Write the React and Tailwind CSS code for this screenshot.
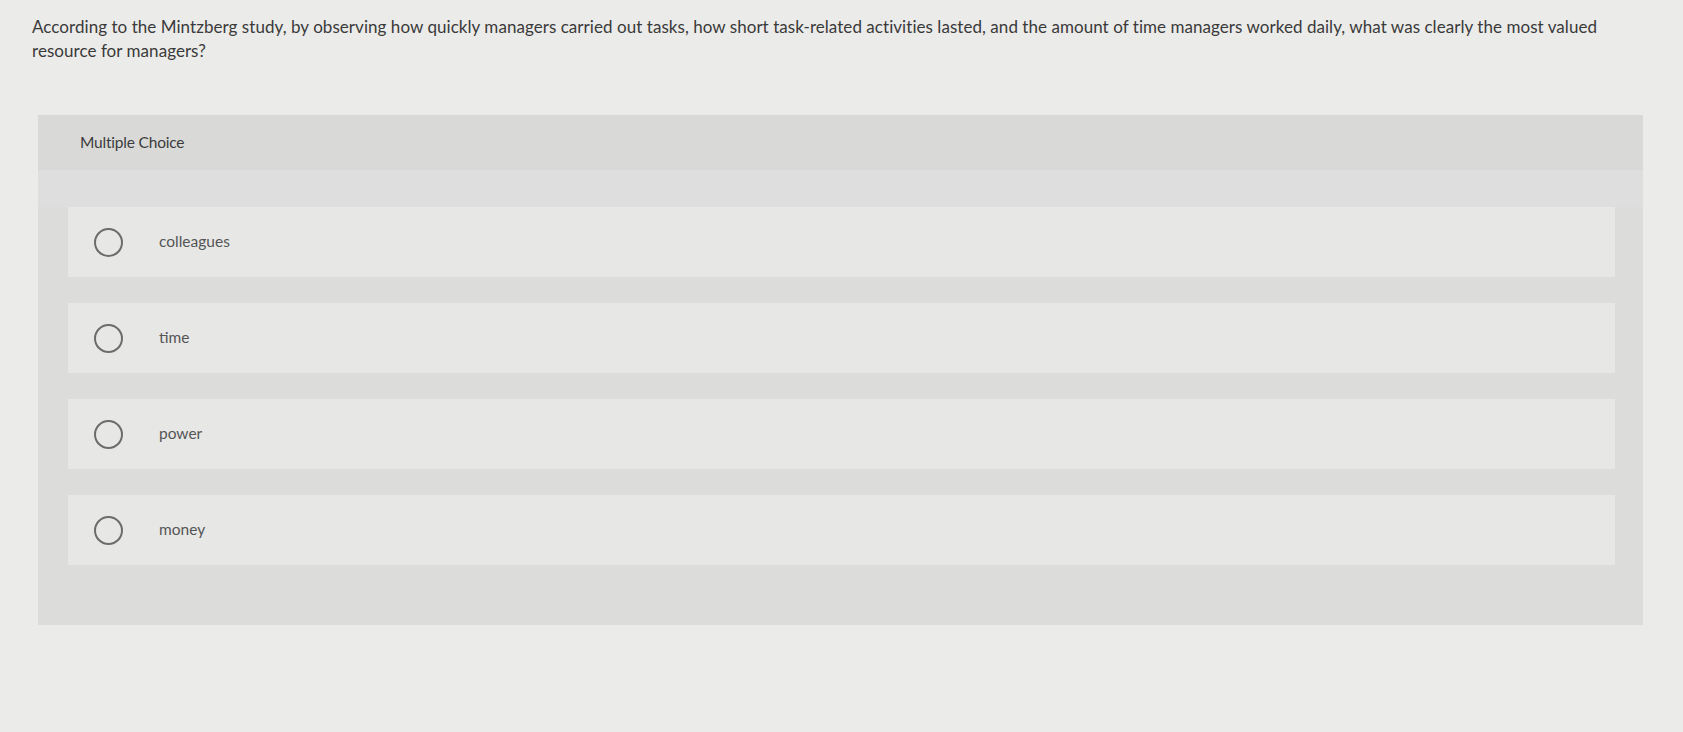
import React from 'react';

const options = ['colleagues', 'time', 'power', 'money'];

export default function App() {
  return (
    <div className="min-h-[732px] w-full bg-[#ebebe9] pt-[15px] font-['Lato',sans-serif]">
      <p className="pl-[32px] pr-[80px] text-[17px] leading-[24px] text-[#3a3a3a] tracking-[0.05px]">
        According to the Mintzberg study, by observing how quickly managers carried out tasks, how short task-related activities lasted, and the amount of time managers worked daily, what was clearly the most valued resource for managers?
      </p>

      <div className="mt-[52px] ml-[38px] mr-[40px] bg-[#dcdcdb] pb-[60px]">
        <div className="h-[55px] flex items-center pl-[42px] text-[15.5px] text-[#3c3c3c] tracking-[-0.2px] bg-[#d9d9d8]">
          Multiple Choice
        </div>
        <div className="h-[37px] bg-[#dedede]" />
        <div className="flex flex-col gap-[26px] pl-[30px] pr-[28px]">
          {options.map((o) => (
            <div key={o} className="h-[70px] bg-[#e7e7e6] flex items-center pl-[26px]">
              <span className="w-[29px] h-[29px] rounded-full border-2 border-[#6b6b6b] shrink-0" />
              <span className="ml-[36px] text-[15.5px] text-[#555] tracking-[0px]">{o}</span>
            </div>
          ))}
        </div>
      </div>
    </div>
  );
}
